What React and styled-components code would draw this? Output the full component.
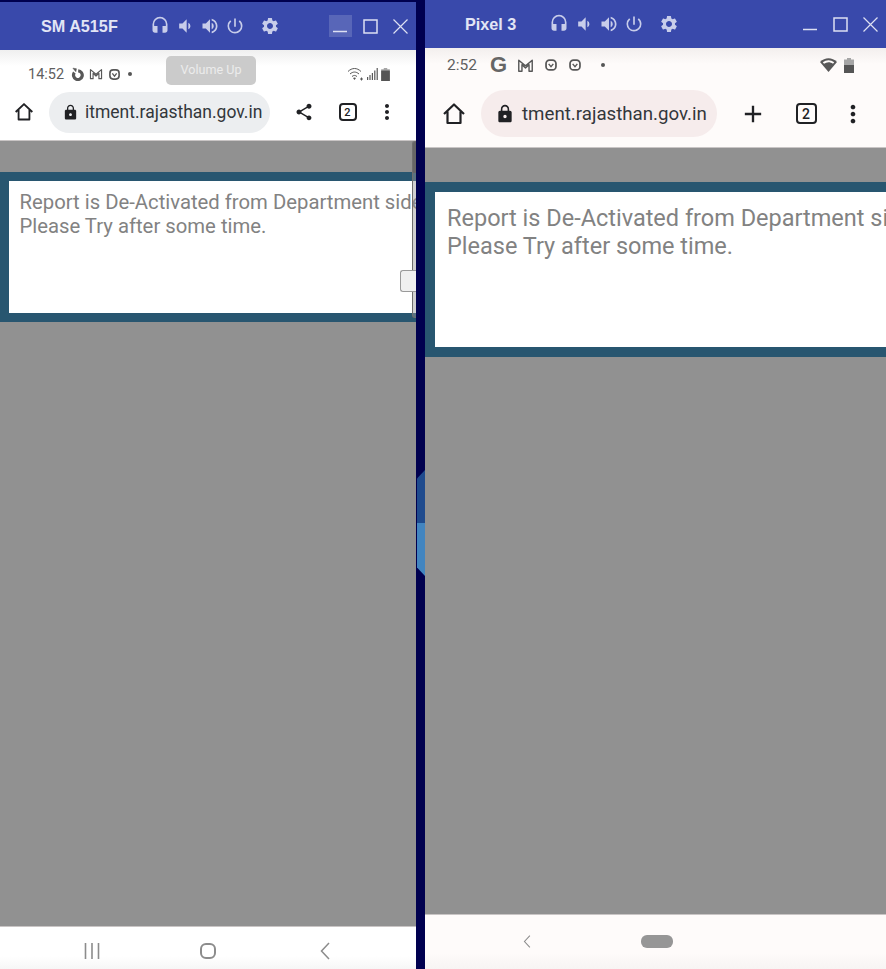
import React from 'react';
import styled, { createGlobalStyle } from 'styled-components';
import {
  MdHeadset,
  MdVolumeDown,
  MdVolumeUp,
  MdPowerSettingsNew,
  MdSettings,
  MdLock,
  MdShare,
  MdAdd,
  MdMoreVert,
} from 'react-icons/md';

const GlobalStyle = createGlobalStyle`
  html, body {
    margin: 0;
    padding: 0;
    background: #00004f;
    overflow: hidden;
  }
  * { box-sizing: border-box; }
`;

const Page = styled.div`
  position: relative;
  display: flex;
  width: 886px;
  height: 969px;
  background: #00004f;
  font-family: Roboto, "Liberation Sans", sans-serif;
  overflow: hidden;
`;

const Phone = styled.div`
  position: relative;
  display: flex;
  flex-direction: column;
  flex: none;
  width: ${({ $width }) => $width}px;
  margin-left: ${({ $left }) => $left}px;
  padding-top: ${({ $top }) => $top}px;
  height: 100%;
  overflow: hidden;
`;

const TitleBar = styled.div`
  display: flex;
  align-items: center;
  flex: none;
  height: 48px;
  background: #3949ab;
  color: #e2e5f5;
  padding: 0 1px 0 ${({ $pad }) => $pad}px;
`;

const DeviceName = styled.div`
  flex: none;
  width: ${({ $width }) => $width}px;
  font-family: "Liberation Sans", Arial, sans-serif;
  font-size: 16.2px;
  font-weight: 700;
`;

const ToolIcons = styled.div`
  display: flex;
  align-items: center;
  gap: 5px;
  color: #c8cdea;

  svg {
    display: block;
    flex: none;
    width: 20px;
    height: 20px;
  }
  svg:last-child {
    margin-left: 10px;
  }
`;

const WindowButtons = styled.div`
  display: flex;
  align-items: center;
  margin-left: auto;
  height: 100%;
`;

const WinButton = styled.div`
  display: flex;
  align-items: center;
  justify-content: center;
  width: 30px;
  height: 22px;
  padding: 0 3.5px;
  color: #dde0f3;
  background: ${({ $active }) => ($active ? '#5866b8' : 'transparent')};
  background-clip: content-box;
`;

const Chrome = styled.div`
  position: relative;
  display: flex;
  flex-direction: column;
  flex: none;
  height: ${({ $height }) => $height}px;
  background: linear-gradient(${({ $shade }) => $shade}, ${({ $tint }) => $tint} 16px);
  border-bottom: 1px solid #c9c5c5;
`;

const StatusBar = styled.div`
  display: flex;
  align-items: center;
  flex: none;
  height: ${({ $height }) => $height}px;
  padding: ${({ $pad }) => $pad};
  color: #5f5f5f;
  font-size: ${({ $size }) => $size}px;
`;

const StatusTime = styled.span`
  margin-right: ${({ $gap }) => $gap}px;
`;

const StatusGlyphs = styled.div`
  display: flex;
  align-items: center;
  gap: ${({ $gap }) => $gap}px;
  color: #585858;
`;

const StatusRight = styled.div`
  display: flex;
  align-items: center;
  gap: ${({ $gap }) => $gap}px;
  margin-left: auto;
  color: #585858;
`;

const Dot = styled.span`
  width: 4px;
  height: 4px;
  margin-left: ${({ $left }) => $left}px;
  border-radius: 50%;
  background: #555;
`;

const BigG = styled.span`
  font-family: "Liberation Sans", Arial, sans-serif;
  font-size: 22px;
  font-weight: 700;
  line-height: 1;
  color: #666;
`;

const Toast = styled.div`
  position: absolute;
  top: 6px;
  left: 166px;
  width: 90px;
  height: 29px;
  border-radius: 5px;
  background: #cbcbcb;
  color: #ececec;
  font-size: 12.6px;
  line-height: 28px;
  text-align: center;
`;

const AddressRow = styled.div`
  display: flex;
  align-items: center;
  flex: none;
  height: ${({ $height }) => $height}px;
  padding-left: ${({ $left }) => $left}px;
  color: #202124;
`;

const HomeSlot = styled.div`
  display: flex;
  align-items: center;
  flex: none;
  width: ${({ $width }) => $width}px;
`;

const Pill = styled.div`
  display: flex;
  align-items: center;
  flex: none;
  width: ${({ $width }) => $width}px;
  height: ${({ $height }) => $height}px;
  padding-left: ${({ $pad }) => $pad}px;
  border-radius: ${({ $height }) => $height / 2}px;
  background: ${({ $bg }) => $bg};
  color: #33373b;
  font-size: ${({ $size }) => $size}px;
  white-space: nowrap;
  overflow: hidden;
`;

const LockIcon = styled(MdLock)`
  flex: none;
  margin-right: ${({ $gap }) => $gap}px;
  color: #202124;
`;

const BarButton = styled.div`
  display: flex;
  align-items: center;
  justify-content: center;
  flex: none;
  width: ${({ $width }) => $width}px;
  color: #202124;
`;

const TabCount = styled.div`
  display: flex;
  align-items: center;
  justify-content: center;
  width: ${({ $box }) => $box}px;
  height: ${({ $box }) => $box}px;
  border: 2px solid #202124;
  border-radius: 4px;
  font-size: ${({ $box }) => $box - 7}px;
  font-weight: 500;
  color: #202124;
`;

const Viewport = styled.div`
  position: relative;
  flex: 1;
  min-height: 0;
  padding-top: ${({ $top }) => $top}px;
  background: #919191;
  overflow: hidden;
`;

const Dialog = styled.div`
  width: ${({ $width }) => $width}px;
  height: ${({ $height }) => $height}px;
  border: ${({ $border }) => $border}px solid #285670;
  background: #fff;
  padding: ${({ $pad }) => $pad};
  color: #828282;
  font-size: ${({ $size }) => $size}px;
  line-height: ${({ $line }) => $line}px;
  white-space: nowrap;
`;

const ScrollEdge = styled.div`
  position: absolute;
  top: 0;
  right: 0;
  width: 4px;
  height: 177px;
  border: 1px solid #6f6f6f;
  border-right: 0;
  border-radius: 3px 0 0 3px;
  background: linear-gradient(#666 0 31px, rgba(150, 150, 150, 0.45) 31px);
`;

const GhostButton = styled.div`
  position: absolute;
  top: 129px;
  right: 0;
  width: 16px;
  height: 22px;
  border: 1px solid #9a9a9a;
  border-right: 0;
  border-radius: 3px 0 0 3px;
  background: #f0f0f0;
`;

const NavBar = styled.div`
  display: flex;
  flex: none;
  align-items: center;
  height: ${({ $height }) => $height}px;
  padding-top: ${({ $topPad }) => $topPad}px;
  padding-bottom: ${({ $bottom }) => $bottom}px;
  background: linear-gradient(${({ $tint }) => $tint} 70%, ${({ $shade }) => $shade});
  border-top: 1px solid #c9c5c5;
  color: #8c8c8c;
`;

const NavSlot = styled.div`
  display: flex;
  justify-content: center;
  flex: none;
  width: ${({ $width }) => $width}px;
`;

const HomePill = styled.div`
  width: 32px;
  height: 13px;
  border-radius: 6px;
  background: #969696;
`;

const SideHandle = styled.div`
  position: absolute;
  top: 470px;
  left: 417px;
  width: 8px;
  height: 106px;
  background: linear-gradient(#1f4b8e 0 50%, #4285c0 50% 100%);
  clip-path: polygon(100% 0, 100% 100%, 0 92%, 0 8%);
`;

function HomeIcon({ size }) {
  return (
    <svg width={size} height={size} viewBox="0 0 24 24" fill="none" stroke="currentColor" strokeWidth="2.2" strokeLinejoin="round">
      <path d="M2 12 12 2.5 22 12M5.5 9.5V21h13V9.5" />
    </svg>
  );
}

function GmailGlyph({ size }) {
  return (
    <svg width={size} height={size} viewBox="0 0 24 24" fill="none" stroke="currentColor" strokeWidth="2" strokeLinejoin="round">
      <path d="M2.500 20V4.500l9.500 8 9.500-8V20h-4.500v-9L12 15.500 7 11v9z" />
    </svg>
  );
}

function VGlyph({ size }) {
  return (
    <svg width={size} height={size} viewBox="0 0 24 24" fill="none" stroke="currentColor" strokeWidth="3">
      <rect x="3.500" y="3.500" width="17" height="17" rx="6" />
      <path d="M8 10l4 5 4-5" strokeWidth="2.400" />
    </svg>
  );
}

function RingGlyph({ size }) {
  return (
    <svg width={size} height={size} viewBox="0 0 24 24" fill="none" stroke="currentColor" strokeWidth="5.500">
      <path d="M14 6.500a7.500 7.500 0 1 1-6.500 3" />
      <path d="M5 2l6 1-1 5z" fill="currentColor" strokeWidth="1" />
    </svg>
  );
}

function SignalGlyph() {
  return (
    <svg width="11" height="12" viewBox="0 0 11 12" fill="currentColor">
      <rect x="0" y="9" width="1.200" height="3" />
      <rect x="2.400" y="7" width="1.200" height="5" />
      <rect x="4.800" y="5" width="1.200" height="7" />
      <rect x="7.200" y="2.500" width="1.200" height="9.500" />
      <rect x="9.600" y="0" width="1.200" height="12" />
    </svg>
  );
}

function WifiLines() {
  return (
    <svg width="17" height="14" viewBox="0 0 17 14" fill="none" stroke="currentColor" strokeWidth="1">
      <path d="M1 4.500c4-4 9-4 13 0M3 7c3-2.600 6-2.600 9 0M5 9.500c1.800-1.400 3.200-1.400 5 0" />
      <path d="M7.500 13l-1.500-2c1-.7 2-.7 3 0z" fill="currentColor" stroke="none" />
      <path d="M13 12h3M14.500 10.500v3" />
    </svg>
  );
}

function WifiFan() {
  return (
    <svg width="17" height="14" viewBox="0 0 17 14" fill="currentColor">
      <path d="M8.500 14 0 4C5-1 12-1 17 4z" />
      <path d="M2.800 4.300C6.200 1.600 10.800 1.600 14.200 4.300L13 5.700C10.200 3.700 6.800 3.700 4 5.700z" fill="#fefbfa" />
    </svg>
  );
}

function BatteryGlyph({ width, height, fillFrom }) {
  return (
    <svg width={width} height={height} viewBox="0 0 10 15">
      <path d="M3 0h4v1.500h3V15H0V1.500h3z" fill="#a6a6a6" />
      <rect y={fillFrom} width="10" height={15 - fillFrom} fill="#555" />
    </svg>
  );
}

function BackChevron({ width, height }) {
  return (
    <svg width={width} height={height} viewBox="0 0 10 18" fill="none" stroke="currentColor" strokeWidth="1.500">
      <path d="M9 1 1.500 9 9 17" />
    </svg>
  );
}

function RecentBars() {
  return (
    <svg width="16" height="16" viewBox="0 0 16 16" fill="none" stroke="currentColor" strokeWidth="1.600">
      <path d="M1.500 0v16M8 0v16M14.500 0v16" />
    </svg>
  );
}

function HomeSquircle() {
  return (
    <svg width="18" height="16" viewBox="0 0 18 16" fill="none" stroke="currentColor" strokeWidth="2">
      <rect x="2" y="1" width="14" height="14" rx="5" />
    </svg>
  );
}

function Minimize() {
  return (
    <svg width="14" height="14" viewBox="0 0 14 14" stroke="currentColor" strokeWidth="1.500">
      <path d="M0 12.500h14" />
    </svg>
  );
}

function Maximize() {
  return (
    <svg width="15" height="15" viewBox="0 0 15 15" fill="none" stroke="currentColor" strokeWidth="1.500">
      <rect x="1" y="1" width="13" height="13" />
    </svg>
  );
}

function CloseX() {
  return (
    <svg width="15" height="15" viewBox="0 0 15 15" fill="none" stroke="currentColor" strokeWidth="1.200">
      <path d="M.5.5l14 14M14.500.5l-14 14" />
    </svg>
  );
}

function TitleTools() {
  return (
    <ToolIcons>
      <MdHeadset />
      <MdVolumeDown />
      <MdVolumeUp />
      <MdPowerSettingsNew />
      <MdSettings />
    </ToolIcons>
  );
}

const MESSAGE = ['Report is De-Activated from Department side', 'Please Try after some time.'];

function App() {
  return (
    <Page>
      <GlobalStyle />
      <Phone $width={416} $left={0} $top={2}>
        <TitleBar $pad={41}>
          <DeviceName $width={109}>SM A515F</DeviceName>
          <TitleTools />
          <WindowButtons>
            <WinButton $active><Minimize /></WinButton>
            <WinButton><Maximize /></WinButton>
            <WinButton><CloseX /></WinButton>
          </WindowButtons>
        </TitleBar>
        <Chrome $height={91} $tint="#ffffff" $shade="#efefef">
          <StatusBar $height={41} $pad="7px 26px 0 28px" $size={14.500}>
            <StatusTime $gap={6}>14:52</StatusTime>
            <StatusGlyphs $gap={5}>
              <RingGlyph size={14} />
              <GmailGlyph size={14} />
              <VGlyph size={13} />
              <Dot $left={2} />
            </StatusGlyphs>
            <StatusRight $gap={3}>
              <WifiLines />
              <SignalGlyph />
              <BatteryGlyph width={9} height={13} fillFrom={3} />
            </StatusRight>
          </StatusBar>
          <Toast>Volume Up</Toast>
          <AddressRow $height={42} $left={14}>
            <HomeSlot $width={35}><HomeIcon size={20} /></HomeSlot>
            <Pill $width={221} $height={41} $pad={13} $bg="#eceef0" $size={17.500}>
              <LockIcon size={17} $gap={6} />
              itment.rajasthan.gov.in
            </Pill>
            <BarButton $width={67}><MdShare size={20} /></BarButton>
            <BarButton $width={21}><TabCount $box={18}>2</TabCount></BarButton>
            <BarButton $width={58}><MdMoreVert size={24} /></BarButton>
          </AddressRow>
        </Chrome>
        <Viewport $top={31}>
          <Dialog $width={440} $height={150} $border={9} $pad="9px 10.500px" $size={20.300} $line={24}>
            {MESSAGE[0]}<br />{MESSAGE[1]}
          </Dialog>
          <ScrollEdge />
          <GhostButton />
        </Viewport>
        <NavBar $height={43} $topPad={5} $bottom={0} $tint="#ffffff" $shade="#f6f6f6">
          <NavSlot $width={184}><RecentBars /></NavSlot>
          <NavSlot $width={48}><HomeSquircle /></NavSlot>
          <NavSlot $width={186}><BackChevron width={10} height={18} /></NavSlot>
        </NavBar>
      </Phone>
      <Phone $width={461} $left={9} $top={0}>
        <TitleBar $pad={40}>
          <DeviceName $width={84}>Pixel 3</DeviceName>
          <TitleTools />
          <WindowButtons>
            <WinButton><Minimize /></WinButton>
            <WinButton><Maximize /></WinButton>
            <WinButton><CloseX /></WinButton>
          </WindowButtons>
        </TitleBar>
        <Chrome $height={100} $tint="#fefbfa" $shade="#f3efee">
          <StatusBar $height={34} $pad="0 32px 0 22px" $size={15.500}>
            <StatusTime $gap={13}>2:52</StatusTime>
            <StatusGlyphs $gap={10}>
              <BigG>G</BigG>
              <GmailGlyph size={17} />
              <VGlyph size={14} />
              <VGlyph size={14} />
              <Dot $left={9} />
            </StatusGlyphs>
            <StatusRight $gap={7}>
              <WifiFan />
              <BatteryGlyph width={10} height={15} fillFrom={7} />
            </StatusRight>
          </StatusBar>
          <AddressRow $height={63} $left={17}>
            <HomeSlot $width={39}><HomeIcon size={24} /></HomeSlot>
            <Pill $width={236} $height={47} $pad={14} $bg="#f6ecec" $size={18.700}>
              <LockIcon size={20} $gap={7} />
              tment.rajasthan.gov.in
            </Pill>
            <BarButton $width={72}><MdAdd size={28} /></BarButton>
            <BarButton $width={34}><TabCount $box={21}>2</TabCount></BarButton>
            <BarButton $width={60}><MdMoreVert size={28} /></BarButton>
          </AddressRow>
        </Chrome>
        <Viewport $top={34}>
          <Dialog $width={500} $height={175} $border={10} $pad="12px 12px" $size={23.500} $line={28}>
            {MESSAGE[0]}<br />{MESSAGE[1]}
          </Dialog>
        </Viewport>
        <NavBar $height={55} $topPad={0} $bottom={2} $tint="#fefbfa" $shade="#f7f4f3">
          <NavSlot $width={204}><BackChevron width={8} height={13} /></NavSlot>
          <NavSlot $width={55}><HomePill /></NavSlot>
        </NavBar>
      </Phone>
      <SideHandle />
    </Page>
  );
}

export default App;
